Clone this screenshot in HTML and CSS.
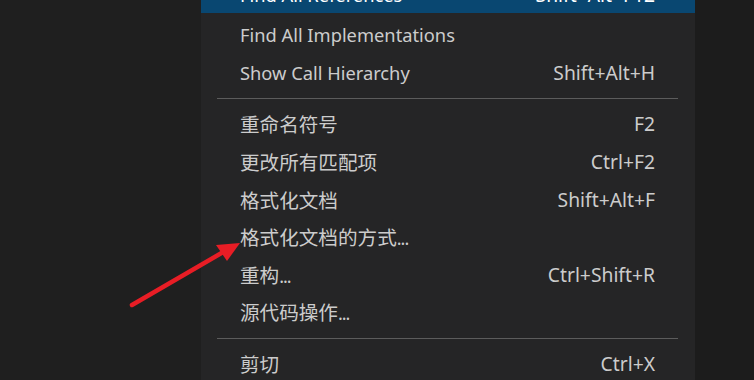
FILE: index.html
```html
<!DOCTYPE html>
<html lang="zh-CN">
<head>
<meta charset="utf-8">
<link rel="stylesheet" href="styles.css">
</head>
<body>
<div class="page">
  <div class="side left"></div>
  <div class="menu">
    <ul class="list">
      <li class="item active"><span class="label">Find All References</span><span class="key">Shift+Alt+F12</span></li>
      <li class="item"><span class="label">Find All Implementations</span><span class="key"></span></li>
      <li class="item"><span class="label">Show Call Hierarchy</span><span class="key">Shift+Alt+H</span></li>
      <li class="sep"></li>
      <li class="item"><span class="label zh">重命名符号</span><span class="key">F2</span></li>
      <li class="item"><span class="label zh">更改所有匹配项</span><span class="key">Ctrl+F2</span></li>
      <li class="item"><span class="label zh">格式化文档</span><span class="key">Shift+Alt+F</span></li>
      <li class="item"><span class="label zh">格式化文档的方式<span class="dots">...</span></span><span class="key"></span></li>
      <li class="item"><span class="label zh">重构<span class="dots">...</span></span><span class="key">Ctrl+Shift+R</span></li>
      <li class="item"><span class="label zh">源代码操作<span class="dots">...</span></span><span class="key"></span></li>
      <li class="sep"></li>
      <li class="item"><span class="label zh">剪切</span><span class="key">Ctrl+X</span></li>
    </ul>
  </div>
  <div class="side right"></div>
  <svg class="arrow" width="754" height="380" viewBox="0 0 754 380">
    <line x1="132" y1="305" x2="225" y2="251" stroke="#e81d25" stroke-width="4.5" stroke-linecap="round"/>
    <polygon points="240,243 216,245 227,261" fill="#e81d25"/>
  </svg>
</div>
</body>
</html>
```
FILE: styles.css
```css
html, body {
  margin: 0;
  padding: 0;
  background: #1f1f1f;
}
.page {
  position: relative;
  width: 754px;
  height: 380px;
  overflow: hidden;
  display: flex;
  font-family: "Noto Sans", "Noto Sans CJK SC", sans-serif;
  font-size: 18.3px;
  color: #cccccc;
}
.side.left {
  width: 201px;
  background: #1f1f1f;
}
.menu {
  width: 494px;
  background: #252526;
}
.side.right {
  flex: 1;
  background: #1c1c1c;
}
.list {
  list-style: none;
  margin: -25px 0 0 0;
  padding: 0;
}
.item {
  height: 37.6px;
  display: flex;
  align-items: center;
  justify-content: space-between;
  padding: 0 40px 0 39px;
  white-space: nowrap;
}
.item.active {
  height: 38px;
  margin-bottom: 3px;
  background: #094771;
  color: #ffffff;
}
.label.zh {
  font-size: 19.6px;
}
.dots {
  font-size: 18px;
  letter-spacing: -1px;
}
.key {
  font-size: 19.3px;
}
.sep {
  height: 1px;
  margin: 7px 17px 6px 16px;
  background: #5c5c5c;
}
.arrow {
  position: absolute;
  left: 0;
  top: 0;
}
```
